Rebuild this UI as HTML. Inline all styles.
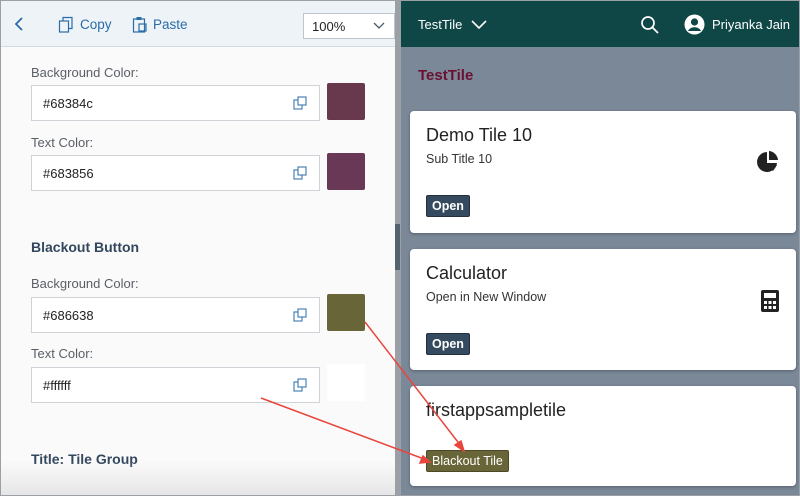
<!DOCTYPE html><html><head><style>
*{box-sizing:border-box;margin:0;padding:0}
body{width:800px;height:496px;overflow:hidden;font-family:"Liberation Sans",sans-serif;background:#9aa0a6;position:relative}
.abs{position:absolute}
.left{left:1px;top:1px;width:394px;height:494px;background:#fafafa}
.tb{left:0;top:0;width:394px;height:46px;background:#eef3f8;border-bottom:1px solid #d5dbe2}
.lbl{font-size:13px;color:#5a5f66;left:30px}
.inp{left:30px;width:289px;height:36px;background:#fff;border:1px solid #cfd3d7;font-size:13px;color:#222;padding:10px 11px}
.inp svg{position:absolute;left:261px;top:10px}
.sw{left:326px;width:38px;height:37px;border-radius:2px}
.h{font-size:14px;font-weight:bold;color:#32475e;left:30px}
.right{left:401px;top:1px;width:398px;height:494px;background:#7b8898}
.card{left:410px;width:386px;background:#fff;border-radius:4px;box-shadow:0 1px 3px rgba(0,0,0,.3)}
.t{font-size:18px;color:#222;left:16px;top:14px;position:absolute}
.st{font-size:12.5px;color:#333;left:16px;top:41px;position:absolute}
.btn{position:absolute;left:16px;background:#354a5f;color:#fff;font-size:12.5px;font-weight:bold;padding:3px 5px;border-radius:2px;border:1px solid #23303d}
</style></head><body>
<div class="abs left">
<div class="abs tb">
<svg class="abs" style="left:13px;top:16px" width="10" height="14"><path d="M8 1L2 7l6 6" stroke="#2a6ca8" stroke-width="1.8" fill="none"/></svg>
<svg class="abs" style="left:57px;top:15px" width="16" height="17"><rect x="1.5" y="5" width="9" height="11" fill="none" stroke="#2a6ca8" stroke-width="1.2"/><path d="M5 5V1.5h9v11h-3.5" fill="none" stroke="#2a6ca8" stroke-width="1.2"/></svg>
<div class="abs" style="left:79px;top:16px;font-size:13.5px;color:#2a6ca8">Copy</div>
<svg class="abs" style="left:131px;top:15px" width="16" height="17"><rect x="1.5" y="3" width="11" height="13" fill="none" stroke="#2a6ca8" stroke-width="1.2"/><rect x="4.5" y="1" width="5" height="3" fill="#2a6ca8"/><rect x="7" y="8" width="7" height="7" fill="none" stroke="#2a6ca8" stroke-width="1.2"/></svg>
<div class="abs" style="left:152px;top:16px;font-size:13.5px;color:#2a6ca8">Paste</div>
<div class="abs" style="left:302px;top:12px;width:92px;height:26px;background:#fff;border:1px solid #bfc5cc;font-size:13px;padding:5px 8px;color:#222">100%</div>
<svg class="abs" style="left:372px;top:21px" width="12" height="8"><path d="M1 1l5 5 5-5" stroke="#4a5a6a" stroke-width="1.3" fill="none"/></svg>
</div>
<div class="abs lbl" style="top:64px">Background Color:</div>
<div class="abs inp" style="top:84px">#68384c<svg width="14" height="14"><rect x="1" y="4" width="8" height="9" fill="none" stroke="#3a78b0" stroke-width="1.1"/><rect x="5" y="1" width="8" height="8" fill="#fff" stroke="#3a78b0" stroke-width="1.1"/></svg></div>
<div class="abs sw" style="top:82px;background:#68384c"></div>
<div class="abs lbl" style="top:134px">Text Color:</div>
<div class="abs inp" style="top:154px">#683856<svg width="14" height="14"><rect x="1" y="4" width="8" height="9" fill="none" stroke="#3a78b0" stroke-width="1.1"/><rect x="5" y="1" width="8" height="8" fill="#fff" stroke="#3a78b0" stroke-width="1.1"/></svg></div>
<div class="abs sw" style="top:152px;background:#683856"></div>
<div class="abs h" style="top:238px">Blackout Button</div>
<div class="abs lbl" style="top:275px">Background Color:</div>
<div class="abs inp" style="top:296px">#686638<svg width="14" height="14"><rect x="1" y="4" width="8" height="9" fill="none" stroke="#3a78b0" stroke-width="1.1"/><rect x="5" y="1" width="8" height="8" fill="#fff" stroke="#3a78b0" stroke-width="1.1"/></svg></div>
<div class="abs sw" style="top:293px;background:#686638;left:326px"></div>
<div class="abs lbl" style="top:345px">Text Color:</div>
<div class="abs inp" style="top:366px">#ffffff<svg width="14" height="14"><rect x="1" y="4" width="8" height="9" fill="none" stroke="#3a78b0" stroke-width="1.1"/><rect x="5" y="1" width="8" height="8" fill="#fff" stroke="#3a78b0" stroke-width="1.1"/></svg></div>
<div class="abs sw" style="top:363px;background:#fff;left:326px"></div>
<div class="abs h" style="top:450px">Title: Tile Group</div>
<div class="abs" style="left:0;top:460px;width:394px;height:34px;background:linear-gradient(rgba(240,240,240,0),#e6e6e6)"></div>
</div>
<div class="abs" style="left:395px;top:224px;width:5px;height:46px;background:#556270"></div>
<div class="abs right">
<div class="abs" style="left:0;top:0;width:398px;height:46px;background:#0f4646"></div>
<div class="abs" style="left:17px;top:16px;color:#fff;font-size:13px">TestTile</div>
<svg class="abs" style="left:70px;top:19px" width="16" height="10"><path d="M1 1l7 7 7-7" stroke="#fff" stroke-width="1.6" fill="none"/></svg>
<svg class="abs" style="left:239px;top:14px" width="20" height="20"><circle cx="8" cy="8" r="6" stroke="#fff" stroke-width="1.7" fill="none"/><path d="M12.5 12.5L18 18" stroke="#fff" stroke-width="1.8"/></svg>
<svg class="abs" style="left:283px;top:13px" width="21" height="21"><circle cx="10.5" cy="10.5" r="10" fill="#fff"/><circle cx="10.5" cy="8" r="3.6" fill="#0f4646"/><path d="M4 17c2-5 11-5 13 0" fill="#0f4646"/></svg>
<div class="abs" style="left:311px;top:16px;color:#fff;font-size:13px">Priyanka Jain</div>
<div class="abs" style="left:17px;top:66px;color:#6b1030;font-size:15px;font-weight:bold">TestTile</div>
</div>
<div class="abs card" style="top:111px;height:122px"><div class="t">Demo Tile 10</div><div class="st">Sub Title 10</div>
<svg class="abs" style="left:346px;top:39px" width="24" height="24"><path d="M11 2A10 10 0 1 0 21 13H11Z" fill="#222"/><path d="M13 1a10 10 0 0 1 9 9h-9Z" fill="#222"/><path d="M13 15h8l-4 6-4-4Z" fill="#222"/></svg>
<div class="btn" style="top:84px">Open</div></div>
<div class="abs card" style="top:249px;height:121px"><div class="t">Calculator</div><div class="st">Open in New Window</div>
<svg class="abs" style="left:350px;top:40px" width="20" height="24"><rect x="1" y="1" width="18" height="22" rx="2" fill="#222"/><rect x="4" y="4" width="12" height="5" fill="#fff"/><g fill="#fff"><rect x="4" y="12" width="3" height="3"/><rect x="8.5" y="12" width="3" height="3"/><rect x="13" y="12" width="3" height="3"/><rect x="4" y="17" width="3" height="3"/><rect x="8.5" y="17" width="3" height="3"/><rect x="13" y="17" width="3" height="3"/></g></svg>
<div class="btn" style="top:84px">Open</div></div>
<div class="abs card" style="top:386px;height:100px"><div class="t">firstappsampletile</div>
<div class="btn" style="top:64px;background:#686638;font-weight:normal;border-color:#4a4826">Blackout Tile</div></div>
<svg class="abs" style="left:0;top:0" width="800" height="496"><g stroke="#e8453c" stroke-width="1.5" fill="#e8453c"><line x1="365" y1="322" x2="461" y2="446"/><path d="M464 451l-9-6 6-4z"/><line x1="261" y1="398" x2="424" y2="459"/><path d="M430 462l-10 1 3-7z"/></g></svg>
</body></html>
